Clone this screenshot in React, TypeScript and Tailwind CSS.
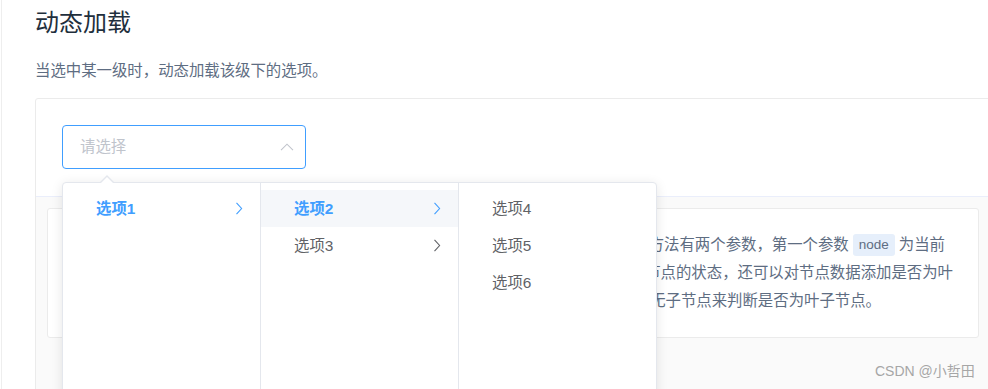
import React from "react";

const FONT = "font-['Liberation_Sans','Noto_Sans_CJK_SC',sans-serif]";

type Node = { label: string; leaf?: boolean; active?: boolean; hover?: boolean };

const columns: Node[][] = [
  [{ label: "选项1", active: true }],
  [
    { label: "选项2", active: true, hover: true },
    { label: "选项3" },
  ],
  [
    { label: "选项4", leaf: true },
    { label: "选项5", leaf: true },
    { label: "选项6", leaf: true },
  ],
];

function ArrowRight({ className }: { className?: string }) {
  return (
    <svg width="8" height="13" viewBox="0 0 8 13" className={className} fill="none">
      <polyline points="1.5,0.8 6.6,6.5 1.5,12.2" stroke="currentColor" strokeWidth="1.1" />
    </svg>
  );
}

function Code({ children }: { children: React.ReactNode }) {
  return (
    <span className="mx-[4px] inline-block h-[22px] -translate-y-[1px] rounded-[3px] bg-[#e6effb] px-[6px] align-middle text-[13.5px] leading-[22px] text-[#5e6d82]">
      {children}
    </span>
  );
}

function CascaderPanel() {
  return (
    <div className="absolute left-0 top-[57px] z-10">
      {/* popper arrow */}
      <div className="absolute left-[38px] top-[-7px] h-0 w-0 border-x-[7px] border-b-[7px] border-x-transparent border-b-[#e4e7ed]" />
      <div className="absolute left-[39px] top-[-5.5px] h-0 w-0 border-x-[6px] border-b-[6px] border-x-transparent border-b-white" />
      <div className="flex h-[240px] rounded-[4px] border border-[#e4e7ed] bg-white shadow-[0_2px_12px_0_rgba(0,0,0,0.1)]">
        {columns.map((col, i) => (
          <ul
            key={i}
            className={
              i < 2
                ? "w-[198px] border-r border-[#e4e7ed] pt-[7px]"
                : "w-[197px] pt-[7px]"
            }
          >
            {col.map((n) => (
              <li
                key={n.label}
                className={
                  "flex h-[37px] items-center pl-[33px] pr-[17px] text-[15.4px] " +
                  (n.hover ? "bg-[#f5f7fa] " : "") +
                  (n.active ? "font-bold text-[#409eff]" : "text-[#606266]")
                }
              >
                <span className="flex-1">{n.label}</span>
                {!n.leaf && <ArrowRight />}
              </li>
            ))}
          </ul>
        ))}
      </div>
    </div>
  );
}

export default function App() {
  return (
    <div className={"relative h-[389px] w-[988px] overflow-hidden bg-white " + FONT}>
      <div className="ml-[1px] h-full border-l border-[#eeeeee] pl-[33px]">
        <h3 className="pt-[5px] text-[24px] leading-[36px] text-[#1f2f3d]">动态加载</h3>
        <p className="mt-[18px] text-[15.4px] leading-[24px] text-[#5e6d82]">
          当选中某一级时，动态加载该级下的选项。
        </p>

        <div className="mt-[15px] w-[956px] rounded-[3px] border border-[#ebebeb]">
          <div className="px-[26px] pb-[27px] pt-[26px]">
            <div className="relative w-[244px]">
              <div className="flex h-[44px] items-center justify-between rounded-[4px] border border-[#409eff] pl-[17px] pr-[11px]">
                <span className="text-[15.4px] text-[#c0c4cc]">请选择</span>
                <svg width="14" height="8" viewBox="0 0 14 8" fill="none">
                  <polyline points="1,7.2 7,1.2 13,7.2" stroke="#c0c4cc" strokeWidth="1.1" />
                </svg>
              </div>
              <CascaderPanel />
            </div>
          </div>

          <div className="h-[220px] border-t border-[#eaeefb] bg-[#fafafa] p-[11px]">
            <div className="rounded-[3px] border border-[#ebebeb] bg-white px-[22px] py-[22px] text-[15.4px] leading-[28px] text-[#5e6d82]">
              <div className="flex justify-end overflow-hidden whitespace-nowrap pr-[11px]">
                <span>
                  通过<Code>lazy</Code>开启动态加载，并通过<Code>lazyLoad</Code>来设置加载数据源的方法。
                  <Code>lazyLoad</Code>方法有两个参数，第一个参数<Code>node</Code>为当前
                </span>
              </div>
              <div className="flex justify-end overflow-hidden whitespace-nowrap pr-[3px]">
                <span>
                  点击的节点，第二个<Code>resolve</Code>为数据加载完成的回调(必须调用)。为了更准确的显示节点的状态，还可以对节点数据添加是否为叶
                </span>
              </div>
              <div className="flex justify-end overflow-hidden whitespace-nowrap pr-[75px]">
                <span>
                  子节点的标志位 (默认字段为<Code>leaf</Code>，可通过<Code>props.leaf</Code>修改)，否则会简单的以有无子节点来判断是否为叶子节点。
                </span>
              </div>
            </div>
          </div>
        </div>
      </div>

      <span className="absolute left-[875px] top-[362px] text-[14px] leading-[18px] text-[#a6a6a6]">
        CSDN @小哲田
      </span>
    </div>
  );
}
